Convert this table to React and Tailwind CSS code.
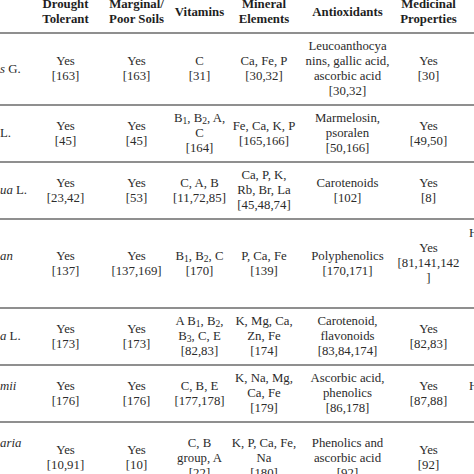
import React from "react";

const B = (n) => (
  <>
    B<sub>{n}</sub>
  </>
);

const header = [
  [""],
  ["Drought", "Tolerant"],
  ["Marginal/", "Poor Soils"],
  ["Vitamins"],
  ["Mineral", "Elements"],
  ["Antioxidants"],
  ["Medicinal", "Properties"],
  [""],
];

const rows = [
  {
    h: "h-[72px]",
    sp: [<><i>s</i> G.</>],
    cells: [
      ["Yes", "[163]"],
      ["Yes", "[163]"],
      ["C", "[31]"],
      ["Ca, Fe, P", "[30,32]"],
      ["Leucoanthocya", "nins, gallic acid,", "ascorbic acid", "[30,32]"],
      ["Yes", "[30]"],
    ],
    last: [],
  },
  {
    h: "h-[57px]",
    sp: ["L."],
    cells: [
      ["Yes", "[45]"],
      ["Yes", "[45]"],
      [<>{B(1)}, {B(2)}, A,</>, "C", "[164]"],
      ["Fe, Ca, K, P", "[165,166]"],
      ["Marmelosin,", "psoralen", "[50,166]"],
      ["Yes", "[49,50]"],
    ],
    last: [],
  },
  {
    h: "h-[57px]",
    sp: [<><i>ua</i> L.</>],
    cells: [
      ["Yes", "[23,42]"],
      ["Yes", "[53]"],
      ["C, A, B", "[11,72,85]"],
      ["Ca, P, K,", "Rb, Br, La", "[45,48,74]"],
      ["Carotenoids", "[102]"],
      ["Yes", "[8]"],
    ],
    last: [],
  },
  {
    h: "h-[89px]",
    sp: [<i>an</i>, "\u00a0"],
    cells: [
      ["Yes", "[137]"],
      ["Yes", "[137,169]"],
      [<>{B(1)}, {B(2)}, C</>, "[170]"],
      ["P, Ca, Fe", "[139]"],
      ["Polyphenolics", "[170,171]"],
      ["Yes", "[81,141,142", "]"],
    ],
    last: ["Hypoglycemic", "\u00a0", "\u00a0", "\u00a0", "\u00a0"],
  },
  {
    h: "h-[57px]",
    sp: [<><i>a</i> L.</>],
    cells: [
      ["Yes", "[173]"],
      ["Yes", "[173]"],
      [<>A {B(1)}, {B(2)},</>, <>{B(3)}, C, E</>, "[82,83]"],
      ["K, Mg, Ca,", "Zn, Fe", "[174]"],
      ["Carotenoid,", "flavonoids", "[83,84,174]"],
      ["Yes", "[82,83]"],
    ],
    last: [],
  },
  {
    h: "h-[57px]",
    sp: [<i>mii</i>, "\u00a0"],
    cells: [
      ["Yes", "[176]"],
      ["Yes", "[176]"],
      ["C, B, E", "[177,178]"],
      ["K, Na, Mg,", "Ca, Fe", "[179]"],
      ["Ascorbic acid,", "phenolics", "[86,178]"],
      ["Yes", "[87,88]"],
    ],
    last: ["Hepatoprotective", "\u00a0"],
  },
  {
    h: "h-[70px]",
    sp: [<i>aria</i>, "\u00a0", "\u00a0"],
    cells: [
      ["Yes", "[10,91]"],
      ["Yes", "[10]"],
      ["C, B", "group, A", "[22]"],
      ["K, P, Ca, Fe,", "Na", "[180]"],
      ["Phenolics and", "ascorbic acid", "[92]"],
      ["Yes", "[92]"],
    ],
    last: [],
    noBorder: true,
  },
];

function Lines({ lines, className = "" }) {
  return (
    <div className={"flex flex-col " + className}>
      {lines.map((l, i) => (
        <div key={i} className="whitespace-nowrap leading-[15px]">
          {l}
        </div>
      ))}
    </div>
  );
}

export default function App() {
  return (
    <div className="w-[474px] h-[474px] overflow-hidden bg-white text-[#2b2b2b] font-['Liberation_Serif',serif] text-[12.8px]">
      <div className="-mt-[8px] grid grid-cols-[32px_67px_75px_51px_78px_89px_73px_80px]">
        {/* header */}
        {header.map((lines, i) => (
          <div
            key={"h" + i}
            className="h-[42px] min-w-0 border-b-2 border-[#8f8f8f] flex items-center justify-center text-center font-bold text-[#1f1f1f]"
          >
            <Lines lines={lines} className="items-center" />
          </div>
        ))}
        {rows.map((r, ri) => (
          <React.Fragment key={ri}>
            <div
              className={
                r.h +
                " min-w-0 flex items-center justify-start " +
                (r.noBorder ? "" : "border-b-2 border-[#8f8f8f]")
              }
            >
              <Lines lines={r.sp} className="items-start" />
            </div>
            {r.cells.map((c, ci) => (
              <div
                key={ci}
                className={
                  r.h +
                  " min-w-0 flex items-center justify-center text-center " +
                  (r.noBorder ? "" : "border-b-2 border-[#8f8f8f]")
                }
              >
                <Lines lines={c} className="items-center" />
              </div>
            ))}
            <div
              className={
                r.h +
                " min-w-0 flex items-center justify-start pl-[4px] " +
                (r.noBorder ? "" : "border-b-2 border-[#8f8f8f]")
              }
            >
              <Lines lines={r.last} className="items-start" />
            </div>
          </React.Fragment>
        ))}
      </div>
    </div>
  );
}
